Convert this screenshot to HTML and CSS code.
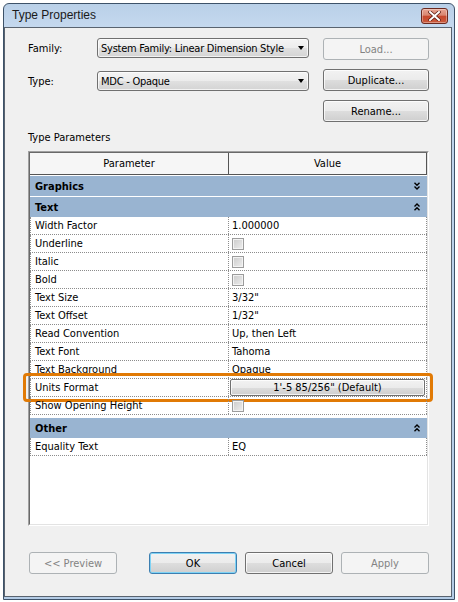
FILE: index.html
```html
<!DOCTYPE html>
<html>
<head>
<meta charset="utf-8">
<link rel="stylesheet" href="styles.css">
</head>
<body>
<div class="window">
  <div class="titlebar">
    <span class="title">Type Properties</span>
    <div class="close">
      <svg width="13" height="10" viewBox="0 0 13 10"><path d="M2 1 L11 9 M11 1 L2 9" stroke="#5a1a10" stroke-width="3.4" stroke-linecap="square"/><path d="M2 1 L11 9 M11 1 L2 9" stroke="#ffffff" stroke-width="2" stroke-linecap="square"/></svg>
    </div>
  </div>
  <div class="client">
    <div class="top">
      <div class="fields">
        <div class="field"><span class="lbl">Family:</span><div class="combo"><span class="ctext">System Family: Linear Dimension Style</span><span class="arrow"></span></div></div>
        <div class="field"><span class="lbl">Type:</span><div class="combo"><span class="ctext">MDC - Opaque</span><span class="arrow"></span></div></div>
      </div>
      <div class="side">
        <div class="btn disabled">Load...</div>
        <div class="btn">Duplicate...</div>
        <div class="btn">Rename...</div>
      </div>
    </div>
    <div class="section-label">Type Parameters</div>
    <div class="grid">
      <div class="grid-inner">
        <div class="head"><div class="hc param">Parameter</div><div class="hc value">Value</div></div>
        <div class="group"><span>Graphics</span><svg class="chev" width="6" height="8" viewBox="0 0 6 8"><path d="M0.5 0.8 L3 3.2 L5.5 0.8 M0.5 4.6 L3 7 L5.5 4.6" fill="none" stroke="#000" stroke-width="1.4"/></svg></div>
        <div class="group"><span>Text</span><svg class="chev" width="6" height="8" viewBox="0 0 6 8"><path d="M0.5 3.4 L3 1 L5.5 3.4 M0.5 7.2 L3 4.8 L5.5 7.2" fill="none" stroke="#000" stroke-width="1.4"/></svg></div>
        <div class="row"><div class="pc">Width Factor</div><div class="vc">1.000000</div></div>
        <div class="row"><div class="pc">Underline</div><div class="vc"><span class="cb"></span></div></div>
        <div class="row"><div class="pc">Italic</div><div class="vc"><span class="cb"></span></div></div>
        <div class="row"><div class="pc">Bold</div><div class="vc"><span class="cb"></span></div></div>
        <div class="row"><div class="pc">Text Size</div><div class="vc">3/32"</div></div>
        <div class="row"><div class="pc">Text Offset</div><div class="vc">1/32"</div></div>
        <div class="row"><div class="pc">Read Convention</div><div class="vc">Up, then Left</div></div>
        <div class="row"><div class="pc">Text Font</div><div class="vc">Tahoma</div></div>
        <div class="row"><div class="pc">Text Background</div><div class="vc">Opaque</div></div>
        <div class="row hl"><div class="pc">Units Format</div><div class="vc btncell"><div class="cellbtn">1'-5 85/256" (Default)</div></div></div>
        <div class="row"><div class="pc">Show Opening Height</div><div class="vc"><span class="cb"></span></div></div>
        <div class="group other"><span>Other</span><svg class="chev" width="6" height="8" viewBox="0 0 6 8"><path d="M0.5 3.4 L3 1 L5.5 3.4 M0.5 7.2 L3 4.8 L5.5 7.2" fill="none" stroke="#000" stroke-width="1.4"/></svg></div>
        <div class="row"><div class="pc">Equality Text</div><div class="vc">EQ</div></div>
      </div>
    </div>
    <div class="bottom">
      <div class="btn wide disabled preview">&lt;&lt; Preview</div>
      <div class="btn wide default">OK</div>
      <div class="btn wide">Cancel</div>
      <div class="btn wide disabled">Apply</div>
    </div>
  </div>
</div>
</body>
</html>
```

FILE: styles.css
```css
* { box-sizing: border-box; }
body {
  margin: 0;
  background: #ffffff;
  font-family: "DejaVu Sans Condensed", "DejaVu Sans", sans-serif;
  font-size: 11px;
  color: #000;
}
.window {
  margin: 3px 0 0 3px;
  width: 452px;
  height: 597px;
  border: 1px solid #3d5269;
  border-radius: 6px 6px 0 0;
  background: linear-gradient(to bottom, #b9d0e8 0px, #c4d8ee 22px, #bcd2ea 200px, #b4cce6 100%);
  padding: 0 2px 2px 0;
  display: flex;
  flex-direction: column;
}
.titlebar {
  height: 23px;
  display: flex;
  justify-content: space-between;
  padding: 0 4px 0 8px;
}
.title {
  font-family: "Liberation Sans", Arial, sans-serif;
  font-size: 12px;
  line-height: 23px;
  color: #1a1a1a;
}
.close {
  margin-top: 4px;
  width: 27px;
  height: 16px;
  border: 1px solid #6b2a20;
  border-radius: 3px;
  background: linear-gradient(to bottom, #e8a493 0%, #d98670 45%, #c7472c 50%, #c95a3c 100%);
  display: flex;
  align-items: center;
  justify-content: center;
  box-shadow: inset 0 0 0 1px rgba(255,255,255,0.35);
}
.client {
  flex: 1;
  border: 1px solid #59636f;
  background: #f0f0f0;
  padding: 10px 0 0 23px;
  display: flex;
  flex-direction: column;
}
.top { display: flex; gap: 14px; }
.fields { display: flex; flex-direction: column; gap: 13px; }
.field { display: flex; align-items: center; height: 20px; }
.lbl { width: 69px; }
.combo {
  width: 212px;
  height: 20px;
  border: 1px solid #707070;
  border-radius: 3px;
  background: linear-gradient(to bottom, #f4f4f4 0%, #ececec 50%, #e0e0e0 51%, #d4d4d4 100%);
  box-shadow: inset 0 0 0 1px rgba(255,255,255,0.7);
  display: flex;
  align-items: center;
  justify-content: space-between;
  padding: 0 4px 0 3px;
}
.ctext { letter-spacing: -0.25px; }
.arrow {
  width: 0; height: 0;
  border-left: 3.5px solid transparent;
  border-right: 3.5px solid transparent;
  border-top: 4px solid #000;
}
.side { display: flex; flex-direction: column; gap: 9px; }
.btn {
  width: 106px;
  height: 22px;
  border: 1px solid #707070;
  border-radius: 3px;
  background: linear-gradient(to bottom, #f2f2f2 0%, #ebebeb 50%, #dddddd 51%, #cfcfcf 100%);
  box-shadow: inset 0 0 0 1px rgba(255,255,255,0.75);
  display: flex;
  align-items: center;
  justify-content: center;
}
.btn.disabled {
  border-color: #adb2b5;
  background: #f4f4f4;
  color: #838383;
  box-shadow: none;
}
.btn.wide { width: 88px; }
.btn.default {
  border-color: #3c7fb1;
  box-shadow: inset 0 0 0 1px #7fd3f5;
}
.section-label {
  margin-top: 9px;
  height: 13px;
  line-height: 13px;
}
.grid {
  margin-top: 7px;
  width: 401px;
  height: 375px;
  border: 1px solid;
  border-color: #a0a0a0 #ffffff #ffffff #a0a0a0;
  background: #ffffff;
}
.grid-inner {
  height: 100%;
  border: 1px solid;
  border-color: #696969 #e3e3e3 #e3e3e3 #696969;
}
.head {
  display: flex;
  height: 22px;
  border-bottom: 1px solid #555;
  border-right: 1px solid #555;
  background: #f6f6f6;
}
.hc { display: flex; align-items: center; justify-content: center; }
.hc.param { width: 199px; border-right: 1px solid #555; }
.hc.value { flex: 1; }
.group {
  margin-top: 1px;
  height: 20px;
  background: #99b4d1;
  font-weight: bold;
  display: flex;
  align-items: center;
  justify-content: space-between;
  padding: 0 7px 0 5px;
}
.group.other { margin-top: 3px; }
.row {
  position: relative;
  display: flex;
  height: 18px;
  line-height: 17px;
  border-bottom: 1px dotted #8c8c8c;
  border-left: 1px dotted #8c8c8c;
}
.pc {
  width: 198px;
  padding-left: 4px;
  border-right: 1px dotted #8c8c8c;
  white-space: nowrap;
}
.vc {
  flex: 1;
  padding-left: 3px;
  border-right: 1px dotted #8c8c8c;
  display: flex;
  align-items: center;
}
.cb {
  width: 12px;
  height: 12px;
  border: 1px solid #9c9c9c;
  background: linear-gradient(135deg, #cbcbcb 0%, #eeeeee 100%);
  box-shadow: inset 0 0 0 1px #f3f3f3;
}
.vc.btncell { padding: 0 1px; }
.cellbtn {
  width: 100%;
  height: 17px;
  border: 1px solid #707070;
  border-radius: 2px;
  background: linear-gradient(to bottom, #f2f2f2 0%, #ebebeb 50%, #dddddd 51%, #cfcfcf 100%);
  box-shadow: inset 0 0 0 1px rgba(255,255,255,0.75);
  display: flex;
  align-items: center;
  justify-content: center;
  line-height: 15px;
}
.row.hl::after {
  content: "";
  position: absolute;
  left: -8px;
  top: -6px;
  right: -6px;
  bottom: -6px;
  border: 3px solid #e17a05;
  border-radius: 4px;
  pointer-events: none;
}
.bottom {
  margin-top: 26px;
  padding-left: 1px;
  display: flex;
  gap: 8px;
}
.preview { margin-right: 24px; }
```
